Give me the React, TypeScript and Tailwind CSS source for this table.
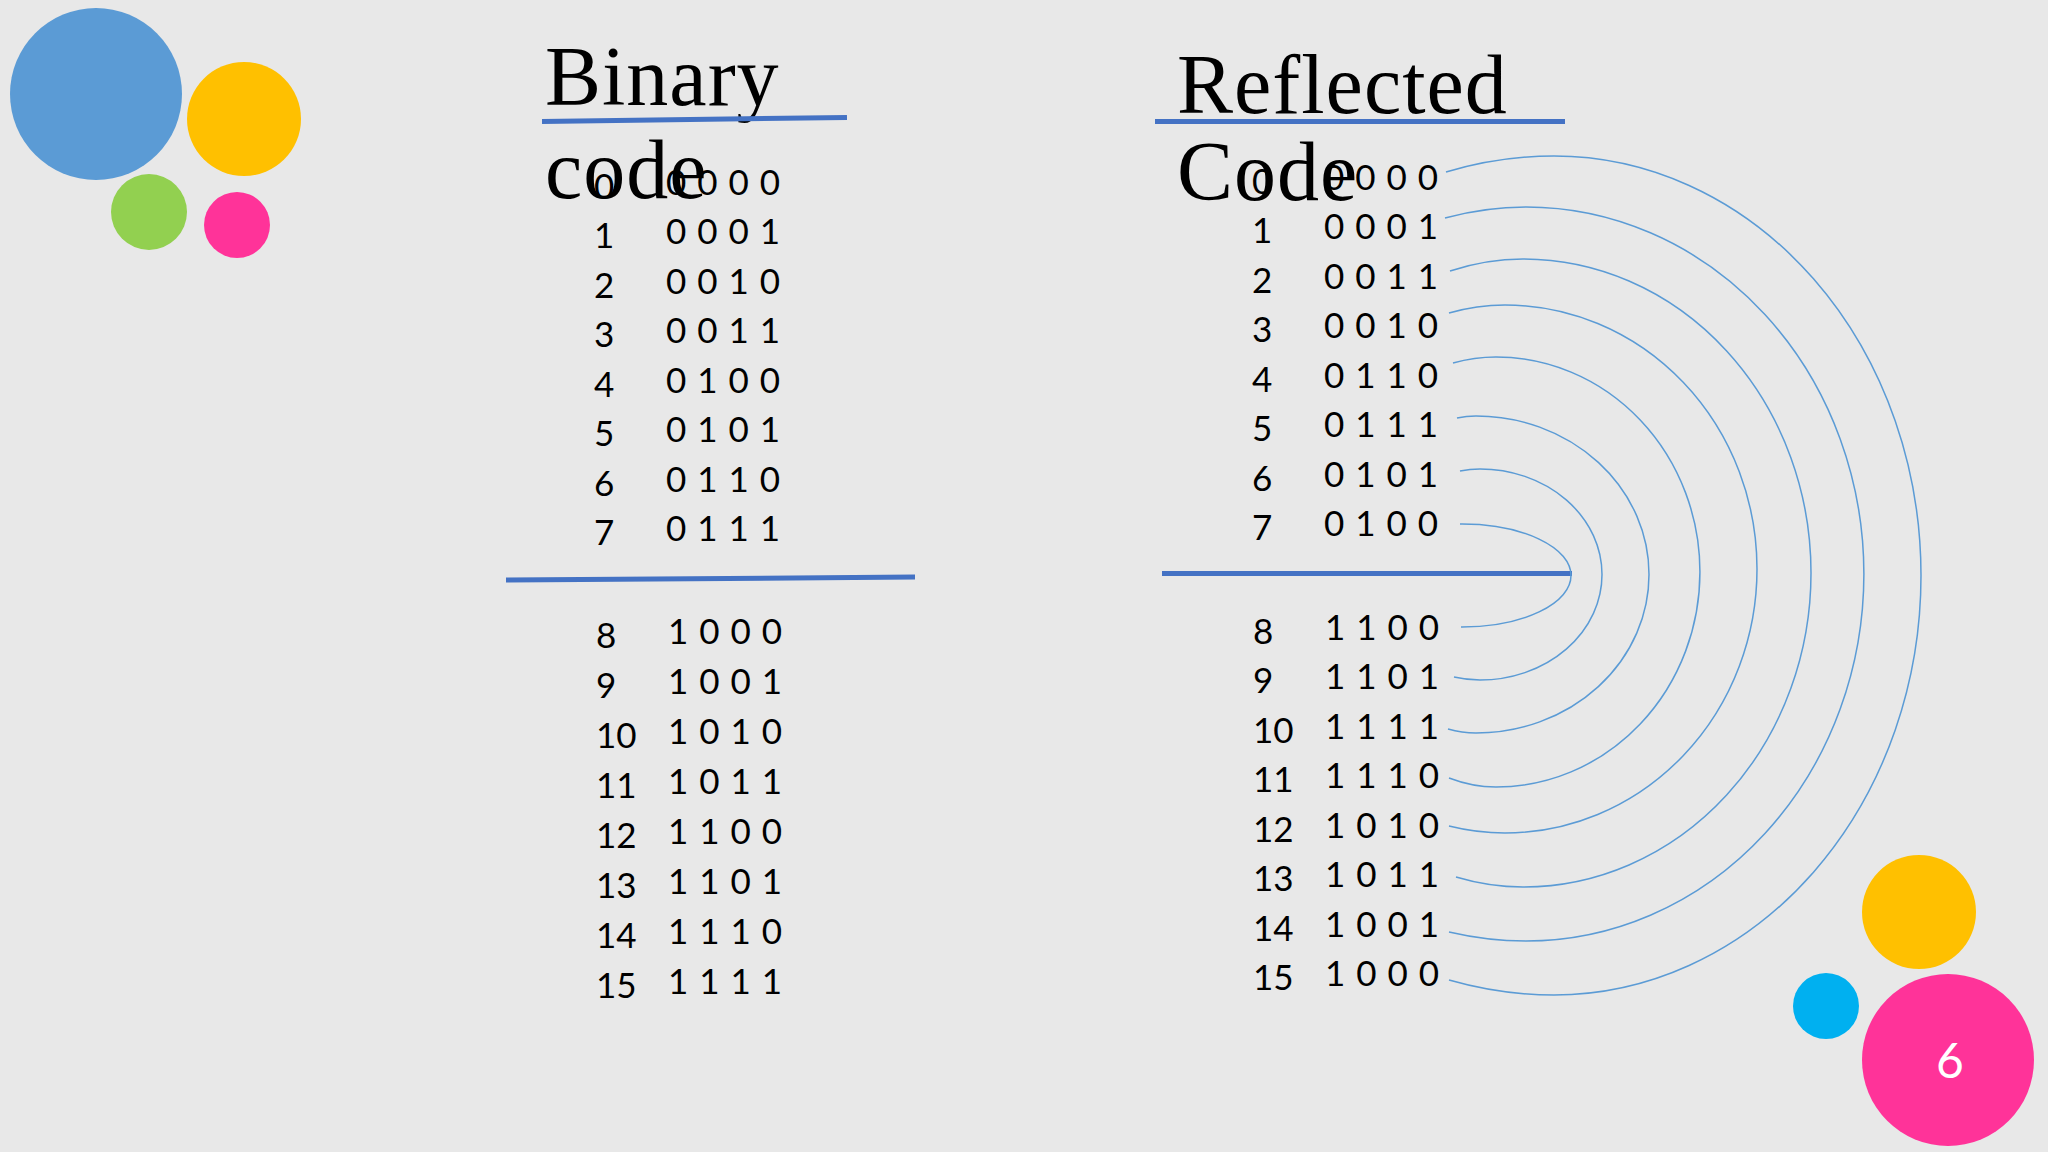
const binary = [
  "0 0 0 0", "0 0 0 1", "0 0 1 0", "0 0 1 1", "0 1 0 0", "0 1 0 1", "0 1 1 0", "0 1 1 1",
  "1 0 0 0", "1 0 0 1", "1 0 1 0", "1 0 1 1", "1 1 0 0", "1 1 0 1", "1 1 1 0", "1 1 1 1",
];

const gray = [
  "0 0 0 0", "0 0 0 1", "0 0 1 1", "0 0 1 0", "0 1 1 0", "0 1 1 1", "0 1 0 1", "0 1 0 0",
  "1 1 0 0", "1 1 0 1", "1 1 1 1", "1 1 1 0", "1 0 1 0", "1 0 1 1", "1 0 0 1", "1 0 0 0",
];

// each arc joins row i of the reflected table with row 15 - i
const arcs = [
  { xs: 1446, ys: 172, cx: 1554, top: 156, bot: 995, rx: 367, xe: 1449, ye: 980 },
  { xs: 1445, ys: 218, cx: 1526, top: 207, bot: 941, rx: 338, xe: 1449, ye: 932 },
  { xs: 1450, ys: 271, cx: 1523, top: 259, bot: 887, rx: 288, xe: 1456, ye: 877 },
  { xs: 1449, ys: 313, cx: 1505, top: 305, bot: 833, rx: 252, xe: 1449, ye: 826 },
  { xs: 1453, ys: 363, cx: 1496, top: 357, bot: 787, rx: 204, xe: 1449, ye: 778 },
  { xs: 1457, ys: 418, cx: 1476, top: 416, bot: 733, rx: 173, xe: 1448, ye: 729 },
  { xs: 1460, ys: 471, cx: 1480, top: 469, bot: 680, rx: 122, xe: 1454, ye: 677 },
  { xs: 1460, ys: 524, cx: 1462, top: 524, bot: 627, rx: 109, xe: 1461, ye: 627 },
];

function Rows({ codes, start, tall }: { codes: string[]; start: number; tall?: boolean }) {
  return (
    <div className="flex flex-col">
      {codes.map((c, i) => (
        <div key={i} className={tall ? "flex h-[50px] items-center" : "flex h-[49.5px] items-center"}>
          <span className="mt-[8px] w-[72px]">{start + i}</span>
          <span className="whitespace-pre tracking-[1px]">{c}</span>
        </div>
      ))}
    </div>
  );
}

function Arcs() {
  return (
    <svg className="pointer-events-none absolute left-0 top-0" width="2048" height="1152" viewBox="0 0 2048 1152" fill="none">
      {arcs.map((a, i) => {
        const ry = (a.bot - a.top) / 2;
        const d = `M ${a.xs} ${a.ys} Q ${(a.xs + a.cx) / 2} ${a.top} ${a.cx} ${a.top} A ${a.rx} ${ry} 0 0 1 ${a.cx} ${a.bot} Q ${(a.cx + a.xe) / 2} ${a.bot} ${a.xe} ${a.ye}`;
        return <path key={i} d={d} stroke="#5b9bd5" strokeWidth="1.5" />;
      })}
    </svg>
  );
}

const serif = "font-['Liberation_Serif',serif] text-[84px] leading-[93px] tracking-[1px]";

export default function App() {
  return (
    <div className="relative flex h-[1152px] w-[2048px] overflow-hidden bg-[#e8e8e8] font-['Lato',sans-serif] text-[35px] text-black">
      {/* top-left bubbles */}
      <div className="flex w-[301px] shrink-0 flex-col self-start pl-[10px] pt-[8px]">
        <div className="flex items-start">
          <div className="h-[172px] w-[172px] rounded-full bg-[#5b9bd5]" />
          <div className="ml-[5px] mt-[54px] h-[114px] w-[114px] rounded-full bg-[#ffc000]" />
        </div>
        <div className="-mt-[6px] flex items-start pl-[101px]">
          <div className="h-[76px] w-[76px] rounded-full bg-[#92d050]" />
          <div className="ml-[17px] mt-[18px] h-[66px] w-[66px] rounded-full bg-[#ff3399]" />
        </div>
      </div>

      {/* binary code */}
      <div className="ml-[205px] w-[410px] shrink-0">
        <div className={`pl-[39px] pt-[30px] ${serif}`}>
          <div>Binary</div>
          <div className="-ml-[3px] -mt-[6px] h-[5px] w-[305px] -rotate-[0.75deg] bg-[#4472c4]" />
          <div className="mt-[1px] h-[33px]">code</div>
        </div>
        <div className="pl-[88px]">
          <Rows codes={binary.slice(0, 8)} start={0} />
        </div>
        <div className="mt-[24px] h-[5px] w-[409px] -rotate-[0.4deg] bg-[#4472c4]" />
        <div className="mt-[24px] pl-[90px]">
          <Rows codes={binary.slice(8)} start={8} tall />
        </div>
      </div>

      {/* reflected code */}
      <div className="ml-[239px] w-[420px] shrink-0">
        <div className={`pt-[38px] ${serif}`}>
          <div className="pl-[22px]">Reflected</div>
          <div className="-mt-[12px] h-[5px] w-[410px] bg-[#4472c4]" />
          <div className="mt-[1px] h-[26px] pl-[22px]">Code</div>
        </div>
        <div className="pl-[97px]">
          <Rows codes={gray.slice(0, 8)} start={0} />
        </div>
        <div className="ml-[7px] mt-[24px] h-[5px] w-[410px] bg-[#4472c4]" />
        <div className="mt-[25px] pl-[98px]">
          <Rows codes={gray.slice(8)} start={8} />
        </div>
      </div>

      {/* bottom-right bubbles and page number */}
      <div className="mb-[6px] ml-auto mr-[14px] flex w-[241px] shrink-0 flex-col self-end">
        <div className="ml-[69px] h-[114px] w-[114px] rounded-full bg-[#ffc000]" />
        <div className="mt-[4px] flex items-start">
          <div className="h-[66px] w-[66px] rounded-full bg-[#00b0f0]" />
          <div className="ml-[3px] mt-[1px] flex h-[172px] w-[172px] items-center justify-center rounded-full bg-[#ff3399] pl-[4px] text-[48px] text-white">
            6
          </div>
        </div>
      </div>

      <Arcs />
    </div>
  );
}
